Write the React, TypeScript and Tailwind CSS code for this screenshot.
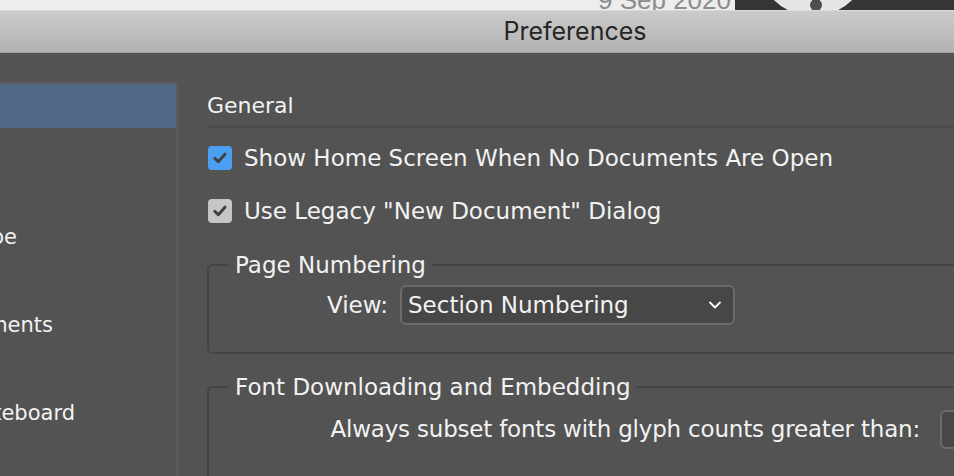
import { ChevronDown } from 'lucide-react'

const SIDEBAR = [
  { label: 'General', show: 0, selected: true },
  { label: 'Interface', show: 0 },
  { label: 'User Interface Scaling', show: 0 },
  { label: 'Type', show: 17 },
  { label: 'Advanced Type', show: 0 },
  { label: 'Units & Increments', show: 53 },
  { label: 'Grids', show: 0 },
  { label: 'Guides & Pasteboard', show: 75 },
  { label: 'Dictionary', show: 0 },
]

function Check({ on }: { on: 'blue' | 'gray' }) {
  return (
    <span
      className={
        'flex h-[24px] w-[24px] shrink-0 items-center justify-center rounded-[4px] ' +
        (on === 'blue' ? 'bg-[#4a9ff3]' : 'bg-[#c6c6c6]')
      }
    >
      <svg width="18" height="18" viewBox="0 0 16 16" fill="none">
        <path d="M3.4 8.3 L6.5 11.3 L12.4 4.6" stroke="#404040" strokeWidth="2.6" strokeLinecap="round" strokeLinejoin="round" />
      </svg>
    </span>
  )
}

export default function App() {
  return (
    <div
      className="flex h-[476px] w-[954px] flex-col overflow-hidden bg-[#535353] text-[#f2f2f2]"
      style={{ fontFamily: '"DejaVu Sans", "Noto Sans", sans-serif' }}
    >
      {/* strip of desktop above the window */}
      <div className="flex h-[10px] shrink-0">
        <div className="relative flex-1 overflow-hidden bg-[#ededed]">
          <span
            className="absolute right-[4px] top-[-13px] text-[26px] leading-[26px] text-[#8c8c8c]"
            style={{ fontFamily: '"Liberation Sans", Arial, sans-serif' }}
          >
            9 Sep 2020
          </span>
        </div>
        <div className="relative w-[219px] overflow-hidden bg-[#353535]">
          <div className="absolute left-[22px] top-[-96px] h-[112px] w-[112px] rounded-full bg-[#e6e6e6]" />
          <div className="absolute left-[75px] top-[-1px] h-[12px] w-[12px] rounded-full bg-[#4e4e4e]" />
        </div>
      </div>

      {/* title bar */}
      <div
        className="flex h-[43px] shrink-0 items-center justify-center border-t border-b border-t-[#d9d9d9] border-b-[#a2a2a2] bg-gradient-to-b from-[#cbcbcb] to-[#b2b2b2] pl-[196px] text-[25px] text-[#262626]"
        style={{ fontFamily: 'Inter, "Liberation Sans", sans-serif' }}
      >
        <span>Preferences</span>
      </div>

      <div className="flex min-h-0 flex-1">
        {/* sidebar */}
        <div className="mt-[29px] w-[178px] shrink-0 border-t-2 border-r-2 border-[#5b5b5b]">
          {SIDEBAR.map((item) => (
            <div
              key={item.label}
              className={'flex h-[44px] items-center ' + (item.selected ? 'bg-[#4f6984]' : '')}
            >
              <div
                className="flex justify-end overflow-hidden whitespace-nowrap text-[21px]"
                style={{ width: item.show }}
              >
                <span className="shrink-0">{item.label}</span>
              </div>
            </div>
          ))}
        </div>

        {/* content */}
        <div className="min-w-0 flex-1 overflow-hidden pl-[29px]">
          <div className="mt-[31px] flex h-[44px] items-center border-b-2 border-[#4b4b4b] text-[22px]">
            General
          </div>

          <div className="mt-[15px] flex h-[30px] items-center gap-[12px] pl-[1px] text-[23px]">
            <Check on="blue" />
            <span>Show Home Screen When No Documents Are Open</span>
          </div>
          <div className="mt-[23px] flex h-[30px] items-center gap-[12px] pl-[1px] text-[23px]">
            <Check on="gray" />
            <span>Use Legacy "New Document" Dialog</span>
          </div>

          <fieldset className="mt-[26px] h-[102px] w-[820px] rounded-[5px] border-2 border-[#454545]">
            <legend className="ml-[20px] px-[6px] text-[23px] leading-[26px]">Page Numbering</legend>
            <div className="mt-[7px] flex items-center gap-[12px] text-[23px]">
              <span className="w-[179px] text-right">View:</span>
              <div className="flex h-[40px] w-[335px] items-center justify-between rounded-[6px] border-2 border-[#6b6b6b] bg-[#474747] pl-[6px] pr-[8px]">
                <span>Section Numbering</span>
                <ChevronDown size={20} strokeWidth={2.2} className="text-white" />
              </div>
            </div>
          </fieldset>

          <fieldset className="mt-[20px] h-[140px] w-[820px] rounded-[5px] border-2 border-[#454545]">
            <legend className="ml-[20px] px-[6px] text-[23px] leading-[26px]">
              Font Downloading and Embedding
            </legend>
            <div className="mt-[10px] flex items-center gap-[20px] text-[23px]">
              <span className="w-[711px] text-right tracking-[-0.2px]">Always subset fonts with glyph counts greater than:</span>
              <div className="h-[39px] w-[80px] shrink-0 rounded-[6px] border-2 border-[#6b6b6b] bg-[#474747]" />
            </div>
          </fieldset>
        </div>
      </div>
    </div>
  )
}
